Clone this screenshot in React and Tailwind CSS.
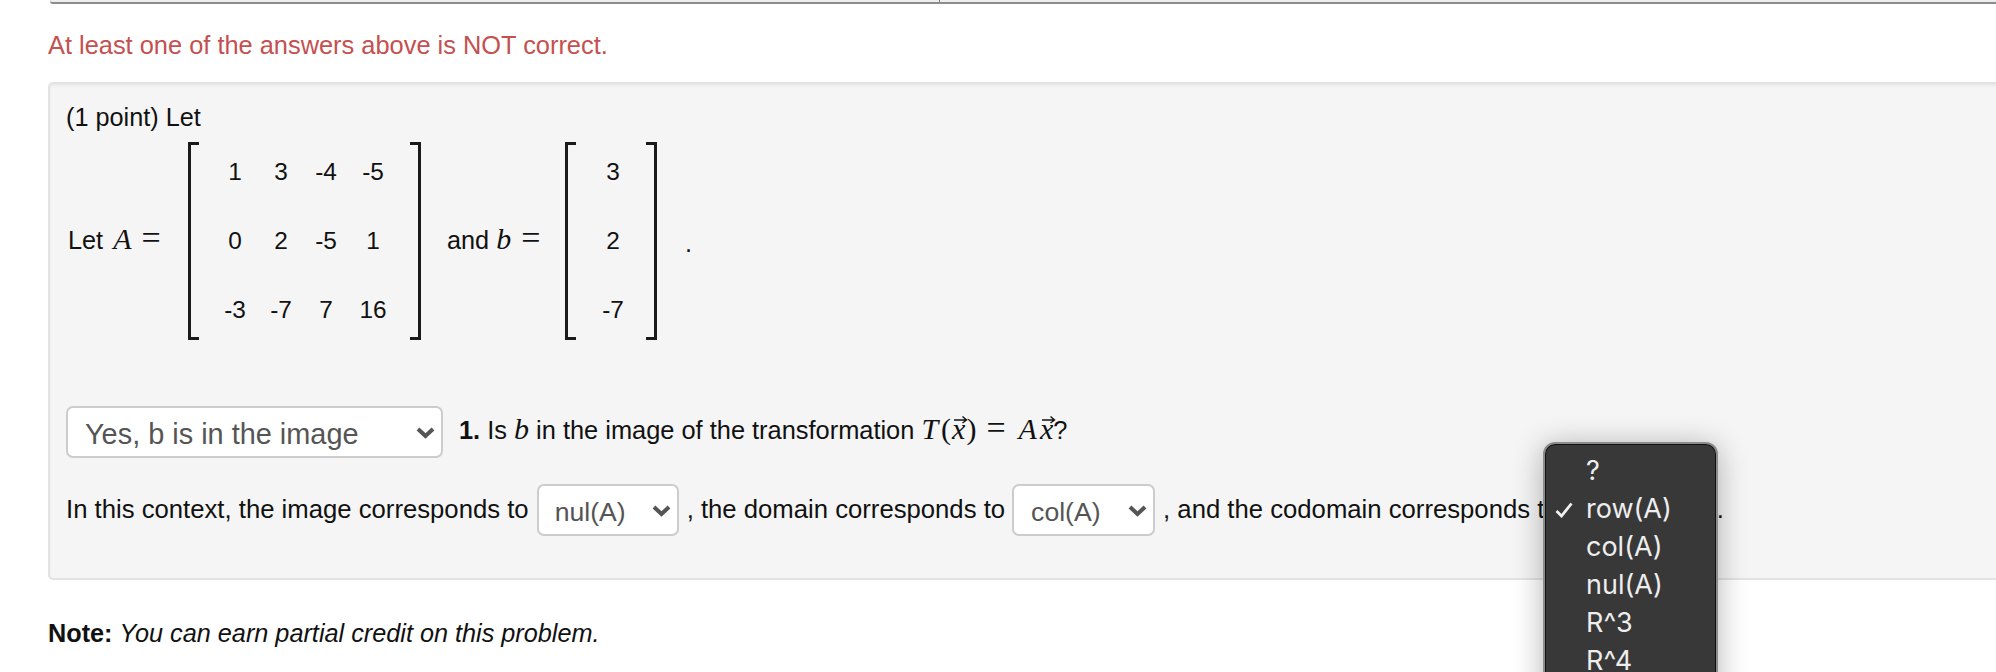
import React from "react";

function Chevron() {
  return (
    <svg width="19" height="13" viewBox="0 0 19 13" className="shrink-0">
      <path d="M2 3 L9.5 10 L17 3" fill="none" stroke="#555555" strokeWidth="4" />
    </svg>
  );
}

function Select({ label, width, big, shifted }) {
  return (
    <div
      className={
        shifted
          ? "-ml-[1px] flex h-[52px] shrink-0 items-center justify-between rounded-[7px] border-2 border-[#cccccc] bg-white pr-[6px] pl-[17px]"
          : "flex h-[52px] shrink-0 items-center justify-between rounded-[7px] border-2 border-[#cccccc] bg-white pr-[6px] pl-[16px]"
      }
      style={{ width }}
    >
      <span className={big ? "pl-[1px] pt-[4px] text-[28.9px] leading-[40px] text-[#555555]" : "pt-[4px] text-[26.6px] leading-[40px] text-[#555555]"}>
        {label}
      </span>
      <Chevron />
    </div>
  );
}

function Bracket({ side }) {
  return (
    <div
      className={
        side === "left"
          ? "h-[198px] w-[11px] shrink-0 border-y-[3px] border-l-[3px] border-[#1a1a1a]"
          : "h-[198px] w-[11px] shrink-0 border-y-[3px] border-r-[3px] border-[#1a1a1a]"
      }
    />
  );
}

function Cell({ children }) {
  return <div className="flex h-[38px] items-center justify-center text-[24.4px]">{children}</div>;
}

function Vec() {
  return (
    <span className="relative inline-block">
      <span className="italic">x</span>
      <svg width="15" height="9" viewBox="0 0 15 9" className="absolute left-[1px] top-[1px]">
        <path d="M1 5 H13 M9.5 1.5 L13.5 5 L9.5 8" fill="none" stroke="#111111" strokeWidth="1.4" />
      </svg>
    </span>
  );
}

function M({ children }) {
  return <span className="font-['Liberation_Serif',serif] text-[30px] leading-none italic">{children}</span>;
}

function Eq() {
  return <span className="mx-[10px] font-['Liberation_Serif',serif] text-[34px] leading-none">=</span>;
}

export default function App() {
  const matrix = ["1", "3", "-4", "-5", "0", "2", "-5", "1", "-3", "-7", "7", "16"];
  return (
    <div className="relative h-[672px] w-[1996px] overflow-hidden bg-white font-['Liberation_Sans',Arial,sans-serif] text-[25.25px] text-[#111111]">
      <div className="relative ml-[50px] h-[4px] rounded-bl-[3px] border-b-2 border-[#8c8c8c] bg-[#eeeeee]">
        <div className="absolute left-[889px] top-0 h-[2px] w-px bg-[#777777]" />
      </div>

      <p className="mt-[25px] ml-[48px] text-[25.4px] leading-[32px] text-[#c4504f]">
        At least one of the answers above is NOT correct.
      </p>

      <div className="mt-[21px] ml-[48px] h-[498px] w-[2000px] rounded-[5px] border-2 border-[#e3e3e3] bg-[#f5f5f5] pt-[17px] pl-[16px] shadow-[inset_0_2px_3px_rgba(0,0,0,0.05)]">
        <p className="leading-[32px]">(1 point) Let</p>

        <div className="mt-[9px] flex h-[198px] items-center">
          <span className="ml-[2px] w-[120px] shrink-0 whitespace-nowrap pb-[2px]">
            Let <span className="ml-[3px]"><M>A</M></span>
            <Eq />
          </span>
          <Bracket side="left" />
          <div className="grid w-[211px] grid-cols-[46px_46px_44px_50px] gap-y-[31px] pl-[13px]">
            {matrix.map((m, i) => (
              <Cell key={i}>{m}</Cell>
            ))}
          </div>
          <Bracket side="right" />
          <span className="ml-[26px] w-[118px] shrink-0 whitespace-nowrap pb-[2px]">
            and <M>b</M>
            <Eq />
          </span>
          <Bracket side="left" />
          <div className="grid w-[70px] grid-cols-1 gap-y-[31px] pl-[4px]">
            <Cell>3</Cell>
            <Cell>2</Cell>
            <Cell>-7</Cell>
          </div>
          <Bracket side="right" />
          <span className="ml-[28px] pt-[6px]">.</span>
        </div>

        <div className="mt-[66px] flex items-center gap-[16px]">
          <Select label="Yes, b is in the image" width="377px" big />
          <span className="whitespace-nowrap pb-[4px] text-[25.4px]">
            <b>1.</b> Is <M>b</M> in the image of the transformation <span className="pr-[3px]"><M>T</M></span>
            <span className="font-['Liberation_Serif',serif] text-[30px] leading-none">
              (<span className="px-[1px]"><Vec /></span>)
            </span>
            <Eq />
            <span className="ml-[3px] pr-[2px]"><M>A</M></span>
            <span className="pl-[1px] font-['Liberation_Serif',serif] text-[30px] leading-none">
              <Vec />
            </span>
            ?
          </span>
        </div>

        <div className="mt-[26px] flex items-center gap-[8px] whitespace-nowrap text-[25.7px]">
          <span className="pb-[2px]">In this context, the image corresponds to</span>
          <Select label="nul(A)" width="142px" />
          <span className="pb-[2px]">, the domain corresponds to</span>
          <Select label="col(A)" width="143px" shifted />
          <span className="pb-[2px]">, and the codomain corresponds to</span>
          <Select label="row(A)" width="142px" />
          <span className="pb-[2px]">.</span>
        </div>
      </div>

      <p className="mt-[37px] ml-[48px] leading-[32px]">
        <b>Note:</b> <i>You can earn partial credit on this problem.</i>
      </p>

      <div className="absolute left-[1543px] top-[442px] h-[270px] w-[175px] rounded-[12px] border-2 border-[#8c8c8c] bg-[#383838] pt-[8px] font-['Inter',sans-serif] text-[27px] text-[#eeeeee] shadow-[0_4px_30px_rgba(0,0,0,0.3),inset_0_0_0_1px_#111111]">
        {["?", "row(A)", "col(A)", "nul(A)", "R^3", "R^4", "R^5"].map((o) => (
          <div key={o} className="relative h-[38px] pl-[41px] leading-[38px]">
            {o === "row(A)" && (
              <svg width="18" height="16" viewBox="0 0 18 16" className="absolute left-[10px] top-[12px]">
                <path d="M1.5 9 L6.5 14 L16.5 1.5" fill="none" stroke="#f0f0f0" strokeWidth="2.8" />
              </svg>
            )}
            {o}
          </div>
        ))}
      </div>
    </div>
  );
}
